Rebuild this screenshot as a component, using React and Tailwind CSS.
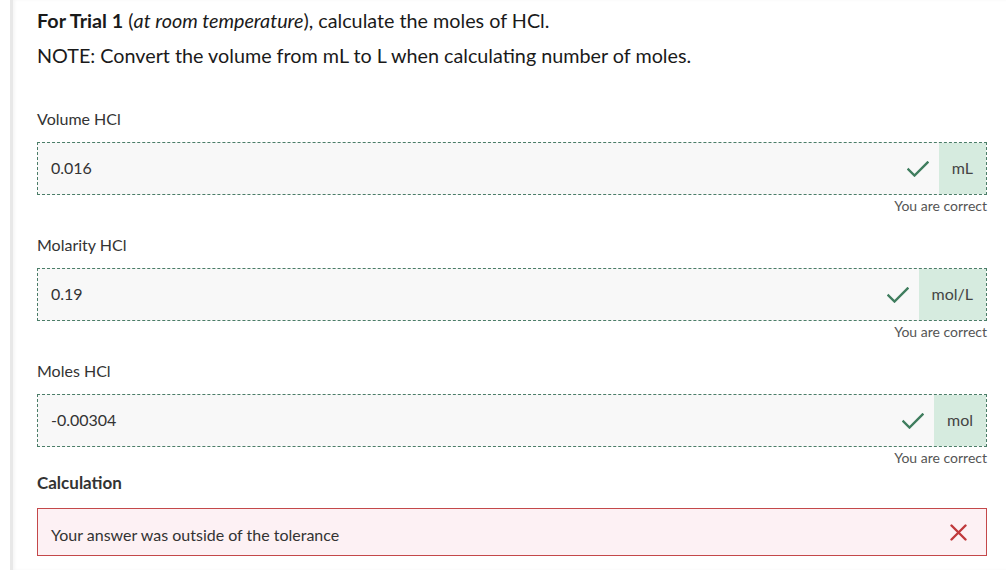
import React from 'react';

const fields = [
  { label: 'Volume HCl', value: '0.016', unit: 'mL' },
  { label: 'Molarity HCl', value: '0.19', unit: 'mol/L' },
  { label: 'Moles HCl', value: '-0.00304', unit: 'mol' },
];

function CheckIcon() {
  return (
    <svg width="22" height="16" viewBox="0 0 22 16" fill="none">
      <path d="M1.5 8.5L7.5 14.5L20.5 1.5" stroke="#3f7d5e" strokeWidth="2.4" strokeLinecap="square" />
    </svg>
  );
}

function CrossIcon() {
  return (
    <svg width="17" height="17" viewBox="0 0 17 17" fill="none">
      <path d="M1.5 1.5L15.5 15.5M15.5 1.5L1.5 15.5" stroke="#c0393b" strokeWidth="2.4" strokeLinecap="round" />
    </svg>
  );
}

function Field({ label, value, unit }) {
  return (
    <div>
      <div className="text-[16px] leading-[24px] text-[#333]">{label}</div>
      <div className="mt-[11px] flex h-[53px] border border-dashed border-[#4b7d68] bg-[#f8f8f8]">
        <div className="flex flex-1 items-center pb-[2px] pl-[13px] text-[16px] text-[#333]">{value}</div>
        <div className="flex items-center pr-[10px]">
          <CheckIcon />
        </div>
        <div className="flex items-center bg-[#d6ebdf] px-[13px] pb-[2px] text-[16px] text-[#444]">{unit}</div>
      </div>
      <div className="mt-[1px] text-right text-[14px] leading-[20px] text-[#555]">You are correct</div>
    </div>
  );
}

export default function App() {
  return (
    <div className="flex min-h-[570px] bg-white" style={{ fontFamily: 'Lato, "Noto Sans", sans-serif' }}>
      <div className="w-[10px] shrink-0" />
      <div className="flex-1 border-l-[3px] border-[#e8e8e8] pl-[24px] pr-[19px] pt-[7px] shadow-[inset_2px_0_3px_rgba(0,0,0,0.04)]">
        <p className="text-[19.75px] leading-[28px] text-[#1a1a1a]">
          <span className="font-bold">For Trial 1</span> (<span className="italic">at room temperature</span>), calculate the moles of HCl.
        </p>
        <p className="mt-[7px] text-[19.75px] leading-[28px] text-[#1a1a1a]">
          NOTE: Convert the volume from mL to L when calculating number of moles.
        </p>

        <div className="mt-[37px] flex flex-col gap-[17px]">
          {fields.map((f) => (
            <Field key={f.label} {...f} />
          ))}
        </div>

        <div className="mt-[3px] text-[17px] font-bold leading-[24px] text-[#333]">Calculation</div>
        <div className="mt-[13px] flex h-[48px] items-center border border-[#c4484a] bg-[#fdf1f4] pl-[13px] pr-[19px] pt-[5px]">
          <div className="flex-1 text-[16px] text-[#333]">Your answer was outside of the tolerance</div>
          <div className="-mt-[5px]">
            <CrossIcon />
          </div>
        </div>
      </div>
    </div>
  );
}
